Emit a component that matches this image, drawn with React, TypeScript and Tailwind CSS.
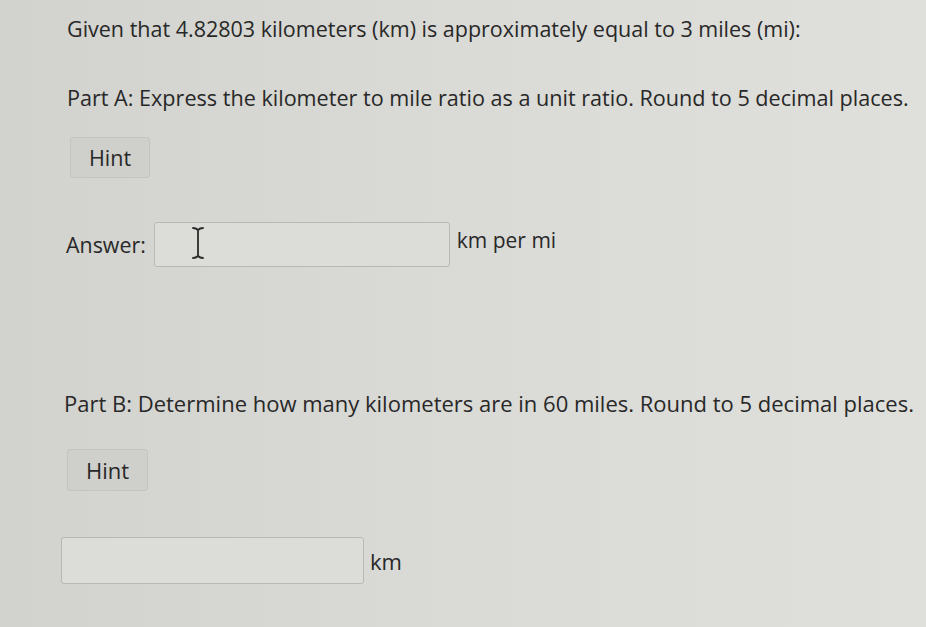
import React from "react";

function IBeam() {
  return (
    <svg
      className="absolute left-[36px] top-[3px]"
      width="14"
      height="34"
      viewBox="0 0 14 34"
      fill="none"
    >
      <path
        d="M2 2 Q5 2 7 4 Q9 2 12 2 M7 4 L7 30 M2 32 Q5 32 7 30 Q9 32 12 32"
        stroke="#2a2a2a"
        strokeWidth="1.8"
        strokeLinecap="round"
      />
    </svg>
  );
}

export default function App() {
  return (
    <div className="w-[926px] h-[627px] overflow-hidden bg-linear-to-r from-[#d2d2ce] via-[#dadad6] to-[#dfdfdb] text-[#282828] font-['Open_Sans',sans-serif]">
      <div className="pl-[67px] pt-[15px] flex flex-col items-start">
        <p className="text-[21.5px] leading-[28px] whitespace-nowrap">
          Given that 4.82803 kilometers (km) is approximately equal to 3 miles (mi):
        </p>
        <p className="mt-[41px] text-[21.6px] leading-[28px] whitespace-nowrap">
          Part A: Express the kilometer to mile ratio as a unit ratio. Round to 5 decimal places.
        </p>
        <button className="mt-[25px] ml-[3px] h-[41px] w-[80px] rounded-[3px] border border-[#c4c4c0] bg-[#cfcfcb] text-[21.5px] leading-[28px] text-[#282828]">
          Hint
        </button>
        <div className="mt-[44px] ml-[-1px] flex items-center">
          <span className="text-[21.4px] leading-[28px] pt-[1px]">Answer:</span>
          <div className="relative ml-[8px] h-[45px] w-[296px] rounded-[3px] border border-[#b8b8b4] bg-[#dcdcd8]">
            <IBeam />
          </div>
          <span className="ml-[7px] self-start pt-[4px] text-[21px] leading-[28px]">km per mi</span>
        </div>
        <p className="mt-[122px] ml-[-3px] text-[22px] leading-[28px] whitespace-nowrap">
          Part B: Determine how many kilometers are in 60 miles. Round to 5 decimal places.
        </p>
        <button className="mt-[32px] h-[42px] w-[81px] rounded-[3px] border border-[#c4c4c0] bg-[#cfcfcb] text-[22px] leading-[28px] text-[#282828]">
          Hint
        </button>
        <div className="mt-[46px] ml-[-6px] flex items-center">
          <div className="h-[47px] w-[303px] rounded-[3px] border border-[#b8b8b4] bg-[#dcdcd8]" />
          <span className="ml-[6px] text-[22px] leading-[28px]">km</span>
        </div>
      </div>
    </div>
  );
}
